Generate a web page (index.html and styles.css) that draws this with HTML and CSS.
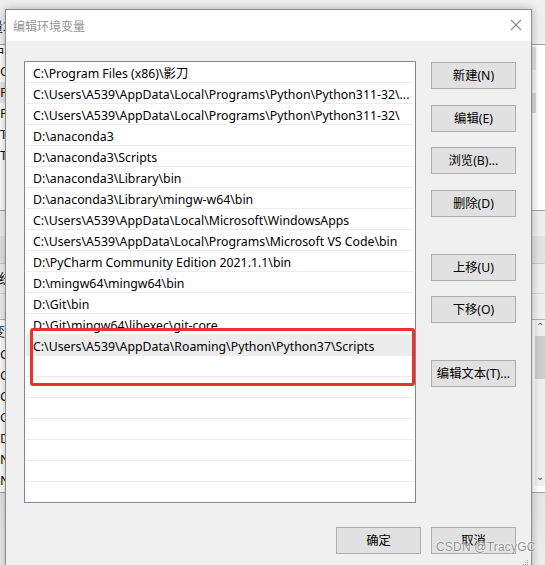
FILE: index.html
```html
<!DOCTYPE html>
<html lang="zh-CN">
<head>
<meta charset="utf-8">
<title>编辑环境变量</title>
<link rel="stylesheet" href="styles.css">
</head>
<body>
<div class="desk">
  <div class="desk-top"><span class="frag top-frag">变量3</span></div>
  <div class="desk-panel panel-a">
    <div class="desk-rows">
      <div class="drow head"><span class="frag">用户变</span></div>
      <div class="drow"><span class="frag">xOne</span></div>
      <div class="drow sel"><span class="frag">xPa</span></div>
      <div class="drow"><span class="frag">xPy</span></div>
      <div class="drow"><span class="frag">xTE</span></div>
      <div class="drow"><span class="frag">xTM</span></div>
    </div>
    <div class="desk-scroll-thin"></div>
  </div>
  <div class="desk-mid">
    <div class="mid-band"></div>
    <div class="mid-label"><span class="frag">系统</span></div>
  </div>
  <div class="desk-panel panel-b">
    <div class="desk-rows">
      <div class="drow head"><span class="frag">系变</span></div>
      <div class="drow"><span class="frag">xCo</span></div>
      <div class="drow"><span class="frag">xCU</span></div>
      <div class="drow"><span class="frag">xCU</span></div>
      <div class="drow"><span class="frag">xCU</span></div>
      <div class="drow"><span class="frag">xDr</span></div>
      <div class="drow"><span class="frag">xNU</span></div>
      <div class="drow"><span class="frag">xNV</span></div>
    </div>
    <div class="desk-scroll">
      <span class="arr">&#8963;</span>
      <div class="thumb"></div>
      <span class="arr down">&#8964;</span>
    </div>
  </div>
  <div class="desk-bottom"></div>
</div>

<div class="dialog">
  <div class="titlebar">
    <span class="title">编辑环境变量</span>
    <svg class="close" width="12" height="12" viewBox="0 0 12 12"><path d="M1 1 L11 11 M11 1 L1 11" stroke="#8a8a8a" stroke-width="1.1" fill="none"/></svg>
  </div>
  <div class="body">
    <div class="main">
      <div class="list">
        <div class="row">C:\Program Files (x86)\影刀</div>
        <div class="row">C:\Users\A539\AppData\Local\Programs\Python\Python311-32\...</div>
        <div class="row">C:\Users\A539\AppData\Local\Programs\Python\Python311-32\</div>
        <div class="row">D:\anaconda3</div>
        <div class="row">D:\anaconda3\Scripts</div>
        <div class="row">D:\anaconda3\Library\bin</div>
        <div class="row">D:\anaconda3\Library\mingw-w64\bin</div>
        <div class="row">C:\Users\A539\AppData\Local\Microsoft\WindowsApps</div>
        <div class="row">C:\Users\A539\AppData\Local\Programs\Microsoft VS Code\bin</div>
        <div class="row">D:\PyCharm Community Edition 2021.1.1\bin</div>
        <div class="row">D:\mingw64\mingw64\bin</div>
        <div class="row">D:\Git\bin</div>
        <div class="row">D:\Git\mingw64\libexec\git-core</div>
        <div class="row selected">C:\Users\A539\AppData\Roaming\Python\Python37\Scripts</div>
        <div class="row"></div>
        <div class="row"></div>
        <div class="row"></div>
        <div class="row"></div>
        <div class="row"></div>
        <div class="row"></div>
        <div class="row"></div>
      </div>
      <div class="btns">
        <div class="btn">新建(N)</div>
        <div class="btn m16">编辑(E)</div>
        <div class="btn m15">浏览(B)...</div>
        <div class="btn m16">删除(D)</div>
        <div class="btn m37">上移(U)</div>
        <div class="btn m15">下移(O)</div>
        <div class="btn m37">编辑文本(T)...</div>
      </div>
    </div>
    <div class="footer">
      <div class="btn">确定</div>
      <div class="btn">取消</div>
    </div>
  </div>
  <svg class="grip" width="6" height="6" viewBox="0 0 6 6"><rect x="4" y="0" width="1" height="1" fill="#999"/><rect x="2" y="2" width="1" height="1" fill="#999"/><rect x="4" y="2" width="1" height="1" fill="#999"/><rect x="0" y="4" width="1" height="1" fill="#999"/><rect x="2" y="4" width="1" height="1" fill="#999"/><rect x="4" y="4" width="1" height="1" fill="#999"/></svg>
</div>

<div class="annot"></div>
<div class="watermark">CSDN @TracyGC</div>
</body>
</html>
```

FILE: styles.css
```css
* { box-sizing: border-box; }
html, body {
  margin: 0;
  padding: 0;
  width: 545px;
  height: 565px;
  overflow: hidden;
  background: #f0f0f0;
  font-family: "Noto Sans", "Noto Sans CJK SC", sans-serif;
  font-size: 12.3px;
  color: #000;
}

/* ---------- background window (desktop) ---------- */
.desk {
  position: absolute;
  left: 0; top: 0;
  width: 545px; height: 565px;
  display: flex;
  flex-direction: column;
  background: #f0f0f0;
}
.frag {
  display: block;
  white-space: nowrap;
  margin-left: -9px;
  font-size: 13px;
  color: #111;
}
.desk-top {
  height: 45px;
  padding-top: 16px;
  border-bottom: 1px solid #a0a0a0;
}
.top-frag { margin-left: -23px; }
.desk-panel {
  display: flex;
  background: #fff;
}
.panel-a {
  height: 166px;
  border-bottom: 1px solid #a0a0a0;
}
.desk-rows { flex: 1; }
.drow {
  height: 21px;
  line-height: 21px;
}
.drow.head { height: 16px; line-height: 14px; }
.drow.sel { background: #eaeaea; }
.drow .frag { margin-left: -7px; }
.drow.head .frag { margin-left: -20px; }
.panel-a .drow.head .frag { margin-left: -21px; }
.desk-scroll-thin {
  width: 4px;
  margin: 2px 9px 0 0;
  height: 66px;
  background: linear-gradient(#e2e2e2 0 35%, #f5f5f5 35% 70%, #d8d8d8 70%);
}
.desk-mid {
  height: 108px;
  display: flex;
  flex-direction: column;
  background: #f0f0f0;
}
.mid-band {
  margin-top: 25px;
  height: 28px;
  background: #e3e3e3;
  border-bottom: 1px solid #c8c8c8;
}
.mid-label { margin-top: 4px; padding-bottom: 6px; border-bottom: 1px solid #d4d4d4; }
.mid-label .frag { margin-left: -14px; }
.panel-b {
  height: 174px;
  border-top: 1px solid #b0b0b0;
  border-bottom: 1px solid #a0a0a0;
}
.panel-b .drow.head { height: 24px; line-height: 22px; }
.panel-b .drow.head .frag { margin-left: -21px; }
.desk-scroll {
  width: 10px;
  display: flex;
  flex-direction: column;
  align-items: center;
  background: #f0f0f0;
  height: 166px;
  font-size: 10px;
  color: #555;
  line-height: 12px;
}
.desk-scroll .arr { height: 12px; }
.desk-scroll .thumb {
  width: 10px;
  height: 43px;
  margin-top: 4px;
  background: #cdcdcd;
}
.desk-scroll .down { margin-top: auto; margin-bottom: 4px; }
.desk-bottom {
  flex: 1;
  background: linear-gradient(#e6e6e6, #eeeeee);
}

/* ---------- dialog ---------- */
.dialog {
  position: absolute;
  left: 5px;
  top: 9px;
  width: 527px;
  height: 570px;
  border: 1px solid #8c8c8c;
  background: #f0f0f0;
  box-shadow: 0 0 9px rgba(0,0,0,0.28);
  display: flex;
  flex-direction: column;
}
.titlebar {
  height: 31px;
  background: #fff;
  display: flex;
  align-items: center;
  justify-content: space-between;
  padding: 0 9px 0 7px;
}
.title {
  font-family: "Noto Sans CJK SC", sans-serif;
  font-size: 12px;
  color: #959595;
  padding-bottom: 1px;
}
.close { margin-bottom: 2px; }
.body {
  flex: 1;
  padding: 20px 15px 0 18px;
  display: flex;
  flex-direction: column;
}
.main {
  display: flex;
  gap: 15px;
}
.list {
  width: 392px;
  border: 1px solid #828790;
  background: #fff;
  padding: 0 2px 0 1px;
}
.row {
  height: 21px;
  line-height: 20px;
  padding-top: 2px;
  border-bottom: 1px solid #ededed;
  padding-left: 7px;
  white-space: nowrap;
  overflow: hidden;
}
.row:last-child { border-bottom: none; height: 20px; }
.row.selected { background: #ececec; }
.btns {
  display: flex;
  flex-direction: column;
  padding-top: 1px;
}
.btn {
  width: 85px;
  height: 27px;
  background: #e1e1e1;
  border: 1px solid #adadad;
  display: flex;
  align-items: center;
  justify-content: center;
  white-space: nowrap;
  padding-bottom: 1px;
}
.m15 { margin-top: 15px; }
.m16 { margin-top: 16px; }
.m37 { margin-top: 37px; }
.footer {
  display: flex;
  justify-content: flex-end;
  gap: 10px;
  margin-top: 24px;
}
.grip {
  position: absolute;
  right: 2px;
  top: 550px;
}

/* ---------- overlays ---------- */
.annot {
  position: absolute;
  left: 30px;
  top: 328px;
  width: 385px;
  height: 58px;
  border: 3px solid #e8322f;
  border-radius: 3px;
}
.watermark {
  position: absolute;
  left: 436px;
  top: 540px;
  font-family: "Liberation Sans", sans-serif;
  font-size: 12px;
  letter-spacing: 0.2px;
  color: rgba(110,110,110,0.75);
  text-shadow: 0 0 1px #fff, 0 0 2px #fff;
  white-space: nowrap;
}
```
